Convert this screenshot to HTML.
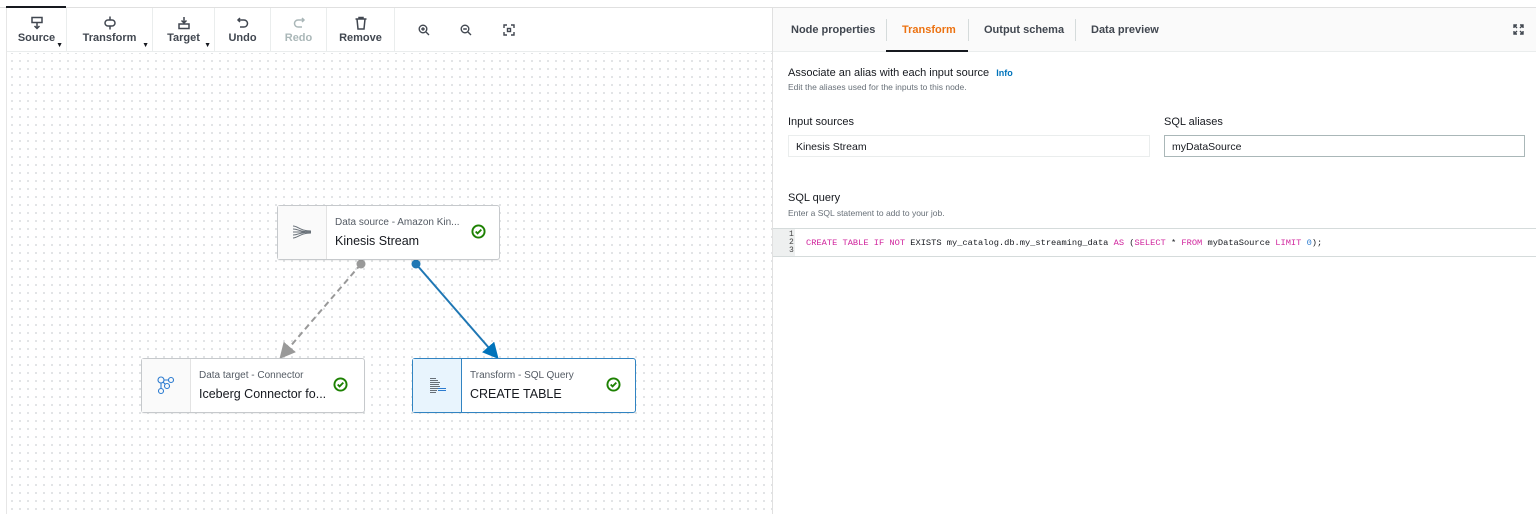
<!DOCTYPE html>
<html><head><meta charset="utf-8"><style>
*{box-sizing:border-box;margin:0;padding:0}
body{width:1536px;height:514px;overflow:hidden;background:#fff;font-family:"Liberation Sans",sans-serif;color:#16191f;position:relative}
.topline{position:absolute;left:0;top:7px;width:1536px;height:1px;background:#e0e0e0}
.topsel{position:absolute;left:6px;top:6px;width:60px;height:2px;background:#16191f}
.left{position:absolute;left:6px;top:8px;width:766px;height:506px;border-left:1px solid #e6e6e6}
.toolbar{position:absolute;left:0;top:0;width:766px;height:44px;border-bottom:1px solid #eaeded;background:#fff}
.tb{position:absolute;top:0;height:44px;text-align:center;font-size:11px;font-weight:bold;color:#414750;border-right:1px solid #eaeded}
.tb svg{display:block;margin:8px auto 2px}
.tb .car{position:absolute;right:3px;bottom:3px;font-size:7px;color:#16191f}
.canvas{position:absolute;left:0;top:45px;width:766px;height:461px;background-image:radial-gradient(circle,#dadddf 0.8px,transparent 1.1px);background-size:8px 8px;background-position:1px 4px}
.node{position:absolute;background:#fff;border:1px solid #c6c9cc;border-radius:3px;height:55px;box-shadow:0 1px 1px rgba(0,0,0,.05)}
.node .ic{position:absolute;left:0;top:0;width:49px;height:53px;border-right:1px solid #e3e3e3;background:#fafafa}
.node .t1{position:absolute;left:57px;top:11px;font-size:10px;color:#545b64}
.node .t2{position:absolute;left:57px;top:28px;font-size:12.5px;color:#16191f}
.node .ok{position:absolute;top:18px}
.right{position:absolute;left:772px;top:8px;width:764px;height:506px;border-left:1px solid #e0e0e0}
.tabs{position:absolute;left:0;top:0;width:764px;height:44px;background:#fafafa;border-bottom:1px solid #eaeded}
.tab{position:absolute;top:16px;font-size:11px;font-weight:bold;color:#414750}
.sep{position:absolute;top:11px;width:1px;height:22px;background:#d5dbdb}
.lbl{position:absolute;font-size:11px;color:#16191f}
.sub{position:absolute;font-size:8.5px;color:#687078}
.inp{position:absolute;height:22px;border:1px solid #eaeded;font-size:10.5px;padding:5px 7px;color:#16191f}
.code{position:absolute;left:0;top:220px;width:764px;height:29px;border-top:1px solid #d5dbdb;border-bottom:1px solid #d5dbdb;font-family:"Liberation Mono",monospace;font-size:8.7px}
.gut{position:absolute;left:0;top:0;width:22px;height:27px;background:#eef0f0;color:#444;font-size:8px;line-height:8px;padding:2px 0 0 16px}
.k{color:#d0259d}
</style></head><body>
<div class="topline"></div><div class="topsel"></div>
<div class="left">
 <div class="toolbar">
  <div class="tb" style="left:0;width:60px"><svg width="14" height="14" viewBox="0 0 14 14" fill="none" stroke="#414750" stroke-width="1.5"><rect x="2" y="1.5" width="10" height="5"/><path d="M7 6.5v6M4.5 10l2.5 2.5L9.5 10"/></svg>Source<span class="car">▼</span></div>
  <div class="tb" style="left:60px;width:86px"><svg width="14" height="14" viewBox="0 0 14 14" fill="none" stroke="#414750" stroke-width="1.5"><path d="M7 0.5v3M7 10.5v3"/><rect x="2" y="4" width="10" height="6" rx="3"/></svg>Transform<span class="car">▼</span></div>
  <div class="tb" style="left:146px;width:62px"><svg width="14" height="14" viewBox="0 0 14 14" fill="none" stroke="#414750" stroke-width="1.5"><path d="M7 1v6M4.5 4.5L7 7l2.5-2.5"/><rect x="2" y="8" width="10" height="4.5"/></svg>Target<span class="car">▼</span></div>
  <div class="tb" style="left:208px;width:56px"><svg width="14" height="14" viewBox="0 0 14 14" fill="none" stroke="#414750" stroke-width="1.5"><path d="M4 2L2 4l2 2M2 4h6a3.5 3.5 0 010 7H4"/></svg>Undo</div>
  <div class="tb" style="left:264px;width:56px;color:#aab7b8"><svg width="14" height="14" viewBox="0 0 14 14" fill="none" stroke="#aab7b8" stroke-width="1.5"><path d="M10 2l2 2-2 2M12 4H6a3.5 3.5 0 000 7h4"/></svg>Redo</div>
  <div class="tb" style="left:320px;width:68px"><svg width="14" height="14" viewBox="0 0 14 14" fill="none" stroke="#414750" stroke-width="1.5"><path d="M1.5 3h11M5 3V1.5h4V3M3 3l1 10h6l1-10"/></svg>Remove</div>
  <div class="tb" style="left:400px;width:34px;border:0"><svg style="margin-top:16px" width="12" height="12" viewBox="0 0 12 12" fill="none" stroke="#414750" stroke-width="1.4"><circle cx="5" cy="5" r="3.8"/><path d="M8 8l3 3M3.2 5h3.6M5 3.2v3.6"/></svg></div>
  <div class="tb" style="left:442px;width:34px;border:0"><svg style="margin-top:16px" width="12" height="12" viewBox="0 0 12 12" fill="none" stroke="#414750" stroke-width="1.4"><circle cx="5" cy="5" r="3.8"/><path d="M8 8l3 3M3.2 5h3.6"/></svg></div>
  <div class="tb" style="left:485px;width:34px;border:0"><svg style="margin-top:16px" width="12" height="12" viewBox="0 0 12 12" fill="none" stroke="#414750" stroke-width="1.4"><path d="M1 4V1h3M8 1h3v3M11 8v3H8M4 11H1V8"/><rect x="4.5" y="4.5" width="3" height="3"/></svg></div>
 </div>
 <div class="canvas"></div>
</div>
<svg style="position:absolute;left:0;top:0" width="772" height="514">
 <defs><marker id="a1" markerWidth="8" markerHeight="8" refX="6" refY="4" orient="auto"><path d="M0 0L8 4 0 8z" fill="#999"/></marker>
 <marker id="a2" markerWidth="8" markerHeight="8" refX="6" refY="4" orient="auto"><path d="M0 0L8 4 0 8z" fill="#0073bb"/></marker></defs>
 <line x1="361" y1="264" x2="282" y2="356" stroke="#999" stroke-width="2" stroke-dasharray="6,4" marker-end="url(#a1)"/>
 <circle cx="361" cy="264" r="4.5" fill="#999"/>
 <line x1="416" y1="264" x2="496" y2="356" stroke="#1f77b4" stroke-width="2" marker-end="url(#a2)"/>
 <circle cx="416" cy="264" r="4.5" fill="#1f77b4"/>
</svg>
<div class="node" style="left:277px;top:205px;width:223px">
 <div class="ic"><svg style="margin:16px 0 0 14px" width="20" height="20" viewBox="0 0 20 20" fill="none" stroke="#687078" stroke-width="1"><path d="M1 4c5 0 7 5 18 5M1 7c5 0 7 3 18 3M1 10h18M1 13c5 0 7-3 18-3M1 16c5 0 7-5 18-5"/></svg></div>
 <div class="t1">Data source - Amazon Kin...</div><div class="t2">Kinesis Stream</div>
 <svg class="ok" style="left:193px" width="15" height="15" viewBox="0 0 16 16" fill="none" stroke="#1d8102" stroke-width="2"><circle cx="8" cy="8" r="6.5"/><path d="M5 8l2 2 4-4"/></svg>
</div>
<div class="node" style="left:141px;top:358px;width:224px">
 <div class="ic"><svg style="margin:16px 0 0 14px" width="20" height="20" viewBox="0 0 20 20" fill="none" stroke="#2b7bd0" stroke-width="1.1"><circle cx="5" cy="5" r="3"/><circle cx="15" cy="5" r="2.5"/><circle cx="11" cy="11" r="2.5"/><circle cx="5" cy="16" r="2.5"/><path d="M8 5h4.5M7 7l2.5 2.5M5 8v5.5"/></svg></div>
 <div class="t1">Data target - Connector</div><div class="t2">Iceberg Connector fo...</div>
 <svg class="ok" style="left:191px" width="15" height="15" viewBox="0 0 16 16" fill="none" stroke="#1d8102" stroke-width="2"><circle cx="8" cy="8" r="6.5"/><path d="M5 8l2 2 4-4"/></svg>
</div>
<div class="node" style="left:412px;top:358px;width:224px;border-color:#3184c2">
 <div class="ic" style="background:#e8f4fd;border-right-color:#3184c2"><svg style="margin:18px 0 0 16px" width="18" height="16" viewBox="0 0 18 16" fill="none" stroke="#687078" stroke-width="1"><path d="M1 1.5h6M1 3.5h8M1 5.5h10M1 7.5h9M1 9.5h10M1 11.5h8M1 13.5h7M1 15.5h6"/><path d="M9 11.5h8M9 13.5h8" stroke="#2b7bd0"/></svg></div>
 <div class="t1">Transform - SQL Query</div><div class="t2">CREATE TABLE</div>
 <svg class="ok" style="left:193px" width="15" height="15" viewBox="0 0 16 16" fill="none" stroke="#1d8102" stroke-width="2"><circle cx="8" cy="8" r="6.5"/><path d="M5 8l2 2 4-4"/></svg>
</div>
<div class="right">
 <div class="tabs">
  <div class="tab" style="left:18px">Node properties</div>
  <div class="sep" style="left:113px"></div>
  <div class="tab" style="left:129px;color:#ec7211">Transform</div>
  <div style="position:absolute;left:113px;top:42px;width:82px;height:2px;background:#16191f"></div>
  <div class="sep" style="left:195px"></div>
  <div class="tab" style="left:211px">Output schema</div>
  <div class="sep" style="left:302px"></div>
  <div class="tab" style="left:318px">Data preview</div>
  <svg style="position:absolute;left:740px;top:16px" width="11" height="11" viewBox="0 0 11 11" fill="none" stroke="#414750" stroke-width="1.4"><path d="M1 4V1h3M7 1h3v3M10 7v3H7M4 10H1V7M1 1l3 3M10 1L7 4M10 10L7 7M1 10l3-3"/></svg>
 </div>
 <div class="lbl" style="left:15px;top:59px">Associate an alias with each input source <span style="color:#0073bb;font-size:9px;font-weight:bold;margin-left:4px">Info</span></div>
 <div class="sub" style="left:15px;top:74px">Edit the aliases used for the inputs to this node.</div>
 <div class="lbl" style="left:15px;top:108px">Input sources</div>
 <div class="lbl" style="left:391px;top:108px">SQL aliases</div>
 <div class="inp" style="left:15px;top:127px;width:362px">Kinesis Stream</div>
 <div class="inp" style="left:391px;top:127px;width:361px;border-color:#aab7b8">myDataSource</div>
 <div class="lbl" style="left:15px;top:184px">SQL query</div>
 <div class="sub" style="left:15px;top:200px">Enter a SQL statement to add to your job.</div>
 <div class="code"><div class="gut">1<br>2<br>3</div>
  <div style="position:absolute;left:33px;top:9px;white-space:pre"><span class="k">CREATE TABLE IF NOT</span> EXISTS my_catalog.db.my_streaming_data <span class="k">AS</span> (<span class="k">SELECT</span> * <span class="k">FROM</span> myDataSource <span class="k">LIMIT</span> <span style="color:#2b7bd0">0</span>);</div>
 </div>
</div>
</body></html>
